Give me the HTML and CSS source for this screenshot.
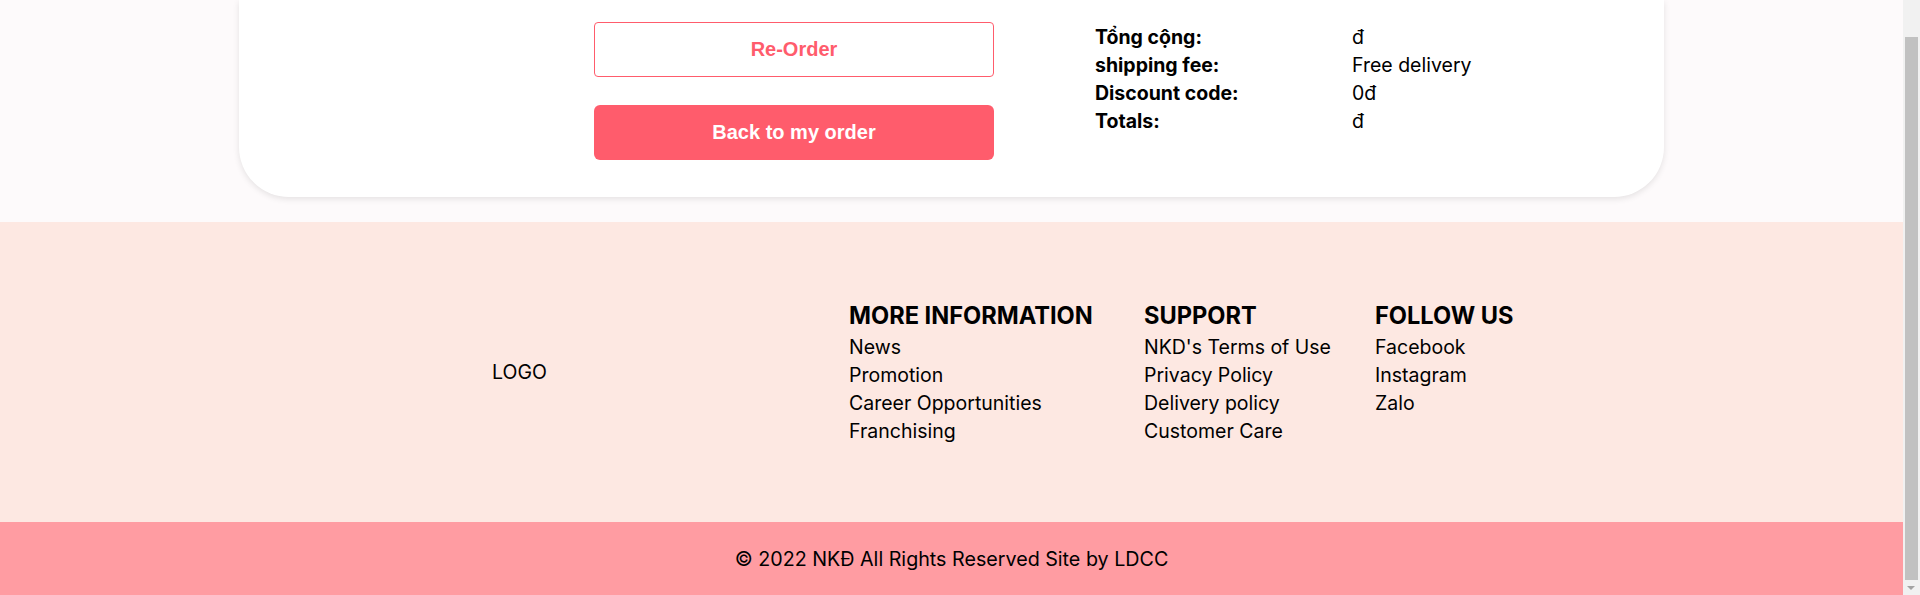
FILE: index.html
```html
<!DOCTYPE html>
<html lang="vi">
<head>
<meta charset="utf-8">
<title>Order detail</title>
<link rel="stylesheet" href="styles.css">
</head>
<body>
<div class="page">
  <section class="order-area">
    <div class="order-card">
      <div class="actions">
        <button class="btn btn-outline">Re-Order</button>
        <button class="btn btn-solid">Back to my order</button>
      </div>
      <dl class="summary">
        <dt>Tổng cộng:</dt><dd>đ</dd>
        <dt>shipping fee:</dt><dd>Free delivery</dd>
        <dt>Discount code:</dt><dd>0đ</dd>
        <dt>Totals:</dt><dd>đ</dd>
      </dl>
    </div>
  </section>
  <footer class="footer">
    <div class="footer-main">
      <div class="footer-logo">LOGO</div>
      <div class="footer-cols">
        <div class="footer-col">
          <h3 class="footer-title">MORE INFORMATION</h3>
          <a class="footer-link">News</a>
          <a class="footer-link">Promotion</a>
          <a class="footer-link">Career Opportunities</a>
          <a class="footer-link">Franchising</a>
        </div>
        <div class="footer-col">
          <h3 class="footer-title">SUPPORT</h3>
          <a class="footer-link">NKD's Terms of Use</a>
          <a class="footer-link">Privacy Policy</a>
          <a class="footer-link">Delivery policy</a>
          <a class="footer-link">Customer Care</a>
        </div>
        <div class="footer-col">
          <h3 class="footer-title">FOLLOW US</h3>
          <a class="footer-link">Facebook</a>
          <a class="footer-link">Instagram</a>
          <a class="footer-link">Zalo</a>
        </div>
      </div>
    </div>
    <div class="footer-bottom">© 2022 NKĐ All Rights Reserved Site by LDCC</div>
  </footer>
</div>
<div class="scrollbar">
  <div class="scroll-thumb"></div>
  <div class="scroll-arrow"></div>
</div>
</body>
</html>
```

FILE: styles.css
```css
* { box-sizing: border-box; }
html, body { margin: 0; padding: 0; height: 100%; overflow: hidden; }
body {
  font-family: "Inter", "Noto Sans", sans-serif;
  color: #000;
  background: #fdfafb;
}
.page {
  margin-right: 17px;
  display: flex;
  flex-direction: column;
}
.order-area {
  background: #fdfafb;
  padding: 0 0 25px;
  display: flex;
  justify-content: center;
}
.order-card {
  width: 1425px;
  background: #fff;
  border-radius: 0 0 50px 50px;
  box-shadow: 0 2px 6px rgba(0,0,0,0.10);
  padding: 22px 0 37px 355px;
  display: flex;
  gap: 101px;
}
.actions {
  width: 400px;
  display: flex;
  flex-direction: column;
  gap: 28px;
}
.btn {
  height: 55px;
  font-family: "Liberation Sans", Arial, sans-serif;
  font-weight: 700;
  font-size: 20px;
  border-radius: 4px;
  cursor: pointer;
}
.btn-outline {
  background: #fff;
  border: 1px solid #ff5c6c;
  color: #ff5c6c;
}
.btn-solid {
  background: #ff5c6c;
  border: none;
  color: #fff;
  border-radius: 6px;
}
.summary {
  margin: 1px 0 0;
  display: grid;
  grid-template-columns: 257px auto;
  align-content: start;
  font-size: 19.5px;
  line-height: 28px;
}
.summary dt { font-weight: 700; }
.summary dd { margin: 0; }
.footer { display: flex; flex-direction: column; }
.footer-main {
  height: 300px;
  background: #fde8e2;
  display: flex;
  align-items: center;
  padding-left: 492px;
}
.footer-logo {
  width: 357px;
  font-size: 19.5px;
}
.footer-cols {
  display: grid;
  grid-template-columns: 295px 231px auto;
}
.footer-col { display: flex; flex-direction: column; }
.footer-title {
  margin: 0;
  font-size: 23.6px;
  line-height: 34px;
  font-weight: 700;
}
.footer-link {
  font-size: 19.5px;
  line-height: 28px;
  color: #000;
}
.footer-bottom {
  height: 73px;
  background: #ff9ca2;
  display: flex;
  align-items: center;
  justify-content: center;
  font-size: 19.7px;
}
.scrollbar {
  position: fixed;
  top: 0;
  right: 0;
  width: 17px;
  height: 100%;
  background: #f1f1f1;
}
.scroll-thumb {
  position: absolute;
  top: 37px;
  bottom: 15px;
  left: 2px;
  right: 2px;
  background: #c1c1c1;
}
.scroll-arrow {
  position: absolute;
  bottom: 5px;
  left: 4px;
  width: 0;
  height: 0;
  border-left: 4px solid transparent;
  border-right: 4px solid transparent;
  border-top: 4px solid #a3a3a3;
}
```
